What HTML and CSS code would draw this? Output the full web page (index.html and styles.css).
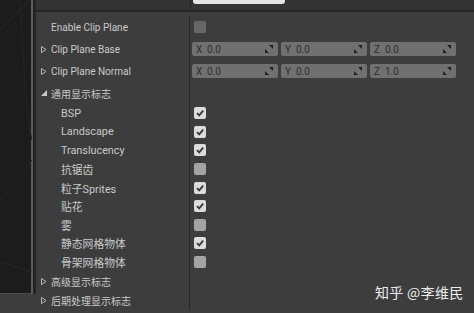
FILE: index.html
```html
<!DOCTYPE html>
<html lang="zh">
<head>
    <meta charset="UTF-8">
    <title>Details</title>
    <link rel="stylesheet" href="styles.css">
</head>
<body>
    <div class="screen">
        <div class="viewport">
            <svg class="viewport-lines" width="32" height="293" viewBox="0 0 32 293">
                <path d="M0 30 L32 -2" stroke="#2a2a2a" stroke-width="1" fill="none"/>
                <path d="M0 200 L32 160" stroke="#262626" stroke-width="1" fill="none"/>
                <path d="M0 262 L32 272" stroke="#2a2a2a" stroke-width="1" fill="none"/>
                <path d="M20 0 Q26 120 32 140" stroke="#252525" stroke-width="1" fill="none"/>
            </svg>
        </div>
        <div class="panel">
            <div class="topbar">
                <div class="topbar-name"></div>
                <div class="topbar-value"><div class="top-input"></div></div>
            </div>
            <div class="rows">
                <div class="row row-head">
                    <div class="name"><span class="arrow"></span>Enable Clip Plane</div>
                    <div class="value"><span class="check check-dark"></span></div>
                </div>
                <div class="row row-head">
                    <div class="name"><span class="arrow"><svg width="6" height="7" viewBox="0 0 6 7"><path d="M0.5 0.5 L5 3.5 L0.5 6.5 Z" fill="none" stroke="#b8b8b8" stroke-width="1"/></svg></span>Clip Plane Base</div>
                    <div class="value vector">
                        <div class="field"><span class="axis">X</span>0.0<svg class="spin" width="8" height="8" viewBox="0 0 8 8"><path d="M4 0 H8 V4 Z M0 4 V8 H4 Z" fill="#1e1e1e"/></svg></div>
                        <div class="field"><span class="axis">Y</span>0.0<svg class="spin" width="8" height="8" viewBox="0 0 8 8"><path d="M4 0 H8 V4 Z M0 4 V8 H4 Z" fill="#1e1e1e"/></svg></div>
                        <div class="field"><span class="axis">Z</span>0.0<svg class="spin" width="8" height="8" viewBox="0 0 8 8"><path d="M4 0 H8 V4 Z M0 4 V8 H4 Z" fill="#1e1e1e"/></svg></div>
                    </div>
                </div>
                <div class="row row-head">
                    <div class="name"><span class="arrow"><svg width="6" height="7" viewBox="0 0 6 7"><path d="M0.5 0.5 L5 3.5 L0.5 6.5 Z" fill="none" stroke="#b8b8b8" stroke-width="1"/></svg></span>Clip Plane Normal</div>
                    <div class="value vector">
                        <div class="field"><span class="axis">X</span>0.0<svg class="spin" width="8" height="8" viewBox="0 0 8 8"><path d="M4 0 H8 V4 Z M0 4 V8 H4 Z" fill="#1e1e1e"/></svg></div>
                        <div class="field"><span class="axis">Y</span>0.0<svg class="spin" width="8" height="8" viewBox="0 0 8 8"><path d="M4 0 H8 V4 Z M0 4 V8 H4 Z" fill="#1e1e1e"/></svg></div>
                        <div class="field"><span class="axis">Z</span>1.0<svg class="spin" width="8" height="8" viewBox="0 0 8 8"><path d="M4 0 H8 V4 Z M0 4 V8 H4 Z" fill="#1e1e1e"/></svg></div>
                    </div>
                </div>
                <div class="row row-group">
                    <div class="name"><span class="arrow"><svg width="6" height="6" viewBox="0 0 6 6"><path d="M6 0 V6 H0 Z" fill="#c8c8c8"/></svg></span>通用显示标志</div>
                    <div class="value"></div>
                </div>
                <div class="row row-item">
                    <div class="name child">BSP</div>
                    <div class="value"><span class="check on"><svg width="12" height="12" viewBox="0 0 12 12"><path d="M3 6.2 L5.2 8.4 L9.2 3.6" fill="none" stroke="#3a3a3a" stroke-width="1.8"/></svg></span></div>
                </div>
                <div class="row row-item">
                    <div class="name child">Landscape</div>
                    <div class="value"><span class="check on"><svg width="12" height="12" viewBox="0 0 12 12"><path d="M3 6.2 L5.2 8.4 L9.2 3.6" fill="none" stroke="#3a3a3a" stroke-width="1.8"/></svg></span></div>
                </div>
                <div class="row row-item">
                    <div class="name child">Translucency</div>
                    <div class="value"><span class="check on"><svg width="12" height="12" viewBox="0 0 12 12"><path d="M3 6.2 L5.2 8.4 L9.2 3.6" fill="none" stroke="#3a3a3a" stroke-width="1.8"/></svg></span></div>
                </div>
                <div class="row row-item">
                    <div class="name child">抗锯齿</div>
                    <div class="value"><span class="check off"></span></div>
                </div>
                <div class="row row-item">
                    <div class="name child">粒子Sprites</div>
                    <div class="value"><span class="check on"><svg width="12" height="12" viewBox="0 0 12 12"><path d="M3 6.2 L5.2 8.4 L9.2 3.6" fill="none" stroke="#3a3a3a" stroke-width="1.8"/></svg></span></div>
                </div>
                <div class="row row-item">
                    <div class="name child">贴花</div>
                    <div class="value"><span class="check on"><svg width="12" height="12" viewBox="0 0 12 12"><path d="M3 6.2 L5.2 8.4 L9.2 3.6" fill="none" stroke="#3a3a3a" stroke-width="1.8"/></svg></span></div>
                </div>
                <div class="row row-item">
                    <div class="name child">雾</div>
                    <div class="value"><span class="check off"></span></div>
                </div>
                <div class="row row-item">
                    <div class="name child">静态网格物体</div>
                    <div class="value"><span class="check on"><svg width="12" height="12" viewBox="0 0 12 12"><path d="M3 6.2 L5.2 8.4 L9.2 3.6" fill="none" stroke="#3a3a3a" stroke-width="1.8"/></svg></span></div>
                </div>
                <div class="row row-item">
                    <div class="name child">骨架网格物体</div>
                    <div class="value"><span class="check off"></span></div>
                </div>
                <div class="row row-foot">
                    <div class="name"><span class="arrow"><svg width="6" height="7" viewBox="0 0 6 7"><path d="M0.5 0.5 L5 3.5 L0.5 6.5 Z" fill="none" stroke="#b8b8b8" stroke-width="1"/></svg></span>高级显示标志</div>
                    <div class="value"></div>
                </div>
                <div class="row row-foot">
                    <div class="name"><span class="arrow"><svg width="6" height="7" viewBox="0 0 6 7"><path d="M0.5 0.5 L5 3.5 L0.5 6.5 Z" fill="none" stroke="#b8b8b8" stroke-width="1"/></svg></span>后期处理显示标志</div>
                    <div class="value"></div>
                </div>
            </div>
        </div>
        <div class="watermark">知乎 @李维民</div>
    </div>
</body>
</html>
```

FILE: styles.css
```css
body {
    margin: 0;
    padding: 0;
    width: 474px;
    height: 313px;
    overflow: hidden;
    background-color: #3d3d3d;
    font-family: Roboto, "Noto Sans CJK SC", sans-serif;
    color: #cacaca;
}
.screen {
    position: relative;
    display: flex;
    width: 474px;
    height: 313px;
}
.viewport {
    width: 31px;
    height: 293px;
    background-color: #1c1c1c;
    border-right: 2px solid #5a5a5a;
    border-bottom: 1px solid #4a4a4a;
    margin-right: 3px;
    box-shadow: 3px 0 0 #242424;
}
.viewport-lines {
    display: block;
}
.panel {
    flex: 1;
    display: flex;
    flex-direction: column;
    background-color: #3d3d3d;
}
.topbar {
    display: flex;
    height: 10px;
    background-color: #333333;
    border-bottom: 2px solid #262626;
}
.topbar-name {
    width: 154px;
    border-right: 1px solid #262626;
}
.topbar-value {
    flex: 1;
    padding-left: 2px;
}
.top-input {
    width: 92px;
    height: 4px;
    background-color: #e4e4e4;
    border-radius: 0 0 3px 3px;
}
.rows {
    padding-top: 4px;
}
.row {
    display: flex;
    align-items: center;
}
.row-head {
    height: 22px;
}
.row-group {
    height: 22px;
}
.row-item {
    height: 18.6px;
}
.row-foot {
    height: 19.5px;
}
.name {
    width: 154px;
    height: 100%;
    display: flex;
    align-items: center;
    border-right: 1px solid #272727;
    box-sizing: border-box;
    font-size: 10px;
    white-space: nowrap;
}
.arrow {
    width: 10px;
    margin-left: 5px;
    display: flex;
    align-items: center;
}
.child {
    padding-left: 25px;
    font-size: 10.8px;
}
.value {
    flex: 1;
    height: 100%;
    display: flex;
    align-items: center;
    padding-left: 4px;
}
.check {
    width: 12px;
    height: 12px;
    border-radius: 2px;
    display: block;
}
.check svg {
    display: block;
}
.check-dark {
    background-color: #686868;
}
.on {
    background-color: #dcdcdc;
}
.off {
    background-color: #a4a4a4;
}
.vector {
    padding-left: 2px;
    gap: 3px;
}
.field {
    width: 86px;
    height: 14px;
    background-color: #707070;
    border-radius: 2px;
    display: flex;
    align-items: center;
    font-size: 10px;
    color: #2e2e2e;
    box-sizing: border-box;
    padding: 0 5px 0 4px;
}
.axis {
    width: 11px;
}
.spin {
    margin-left: auto;
}
.watermark {
    position: absolute;
    left: 375px;
    top: 282px;
    font-family: "Noto Sans CJK SC", sans-serif;
    font-size: 14px;
    color: #ececec;
    letter-spacing: 0.3px;
}
```
